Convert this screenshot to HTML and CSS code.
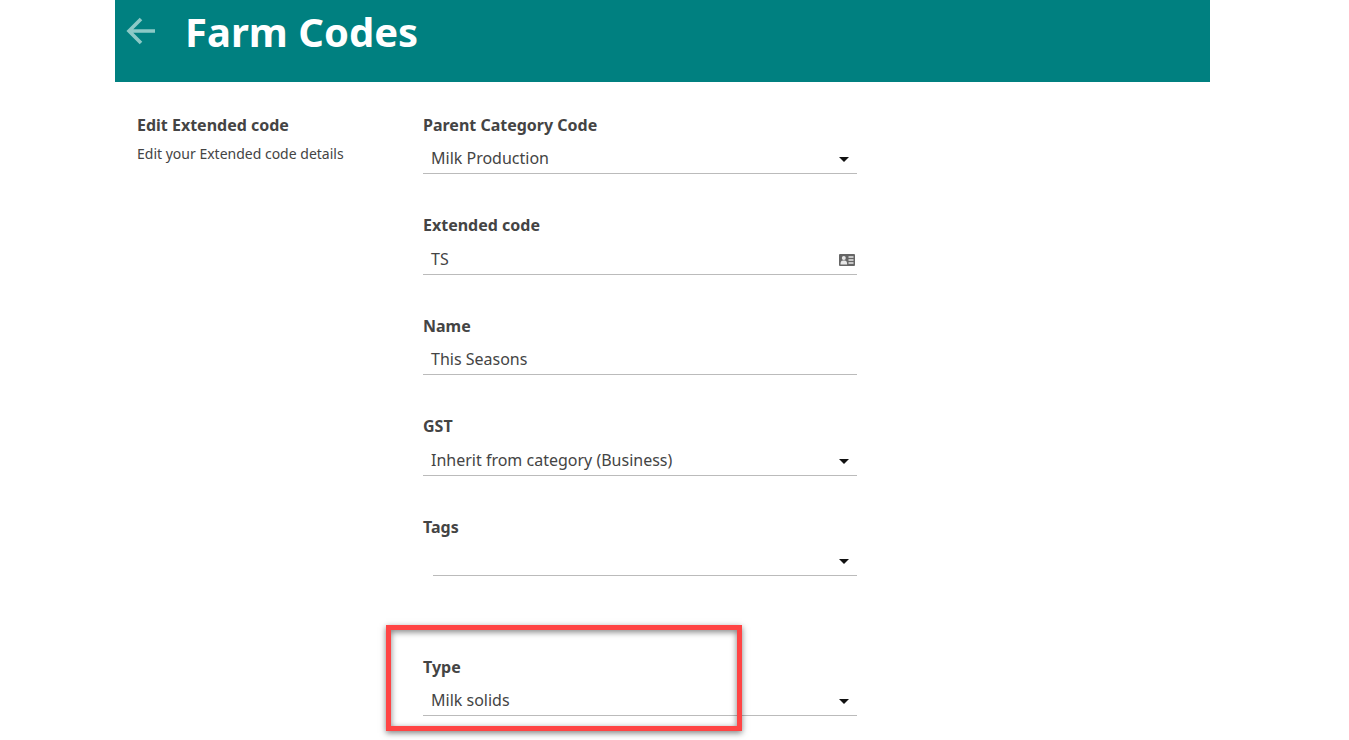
FILE: index.html
```html
<!DOCTYPE html>
<html>
	<head>
		<link rel="stylesheet" href="styles.css">
		<meta charset="UTF-8">
		<title>Farm Codes</title>
	</head>
	<body>
		<div class="page">
			<div class="top">
				<svg class="back" width="30" height="30" viewBox="0 0 30 30">
					<path d="M29 14H4M15 2L3 14l12 12" fill="none" stroke="#8cc9c6" stroke-width="3.600"/>
				</svg>
				<h1 class="top-title">Farm Codes</h1>
			</div>
			<div class="content">
				<div class="side">
					<h2 class="side-title">Edit Extended code</h2>
					<p class="side-text">Edit your Extended code details</p>
				</div>
				<div class="form">
					<div class="field">
						<label class="field-label">Parent Category Code</label>
						<div class="field-box">
							<span class="field-value">Milk Production</span>
							<i class="arrow"></i>
						</div>
					</div>
					<div class="field">
						<label class="field-label">Extended code</label>
						<div class="field-box">
							<span class="field-value">TS</span>
							<svg class="card" width="16" height="12" viewBox="0 0 16 12">
								<rect width="16" height="12" rx="1" fill="#666"/>
								<circle cx="4.800" cy="4" r="2" fill="#e8e8e8"/>
								<path d="M1.500 10.500c0-3.500 1-4 3.300-4s3.300.5 3.300 4z" fill="#e8e8e8"/>
								<path d="M9.500 3H14.500M9.500 6H14.500M9.500 9H14.500" stroke="#e8e8e8" stroke-width="1.300"/>
							</svg>
						</div>
					</div>
					<div class="field">
						<label class="field-label">Name</label>
						<div class="field-box">
							<span class="field-value">This Seasons</span>
						</div>
					</div>
					<div class="field">
						<label class="field-label">GST</label>
						<div class="field-box">
							<span class="field-value">Inherit from category (Business)</span>
							<i class="arrow"></i>
						</div>
					</div>
					<div class="field">
						<label class="field-label">Tags</label>
						<div class="field-box field-tags">
							<span class="field-value">&nbsp;</span>
							<i class="arrow"></i>
						</div>
					</div>
					<div class="field field-type">
						<label class="field-label">Type</label>
						<div class="field-box">
							<span class="field-value">Milk solids</span>
							<i class="arrow"></i>
						</div>
						<div class="mark"></div>
					</div>
				</div>
			</div>
		</div>
	</body>
</html>
```

FILE: styles.css
```css
html,body{
	margin:0;
	padding:0;
	background:#fff;
}
body{
	font-family:"Noto Sans","Open Sans",sans-serif;
	color:#444;
	height:740px;
	overflow:hidden;
}
h1,h2,p{
	margin:0;
	padding:0;
}
.page{
	width:1095px;
	margin-left:115px;
}
.top{
	height:82px;
	background:#008080;
	display:flex;
	align-items:flex-start;
}
.back{
	margin:17px 0 0 11px;
}
.top-title{
	margin-left:29px;
	font-size:40px;
	line-height:64px;
	font-weight:700;
	color:#fff;
}
.content{
	display:flex;
	padding-top:32px;
}
.side{
	width:308px;
	padding-left:22px;
	box-sizing:border-box;
}
.side-title{
	font-size:16px;
	line-height:22px;
	font-weight:700;
}
.side-text{
	margin-top:8px;
	font-size:14px;
	line-height:20px;
}
.form{
	width:434px;
}
.field{
	height:100.4px;
}
.field-label{
	display:block;
	font-size:16px;
	line-height:22px;
	font-weight:700;
}
.field-box{
	height:39px;
	box-sizing:border-box;
	border-bottom:1px solid #bbb;
	padding:8px 2px 0 8px;
	margin-top:-.6px;
	display:flex;
	align-items:center;
	justify-content:space-between;
	font-size:16px;
}
.field-tags{
	margin-left:10px;
}
.arrow{
	width:0;
	height:0;
	border-left:5.500px solid transparent;
	border-right:5.500px solid transparent;
	border-top:5.500px solid #111;
	margin:3px 6px 0 0;
}
.card{
	margin:3px 0 0 0;
}
.field-type{
	position:relative;
	margin-top:40px;
}
.mark{
	position:absolute;
	left:-37px;
	top:-31px;
	width:356px;
	height:106px;
	box-sizing:border-box;
	border:5px solid #ff4444;
	box-shadow:0 2px 6px rgba(0,0,0,.5),inset 0 2px 6px rgba(0,0,0,.5);
}
```
